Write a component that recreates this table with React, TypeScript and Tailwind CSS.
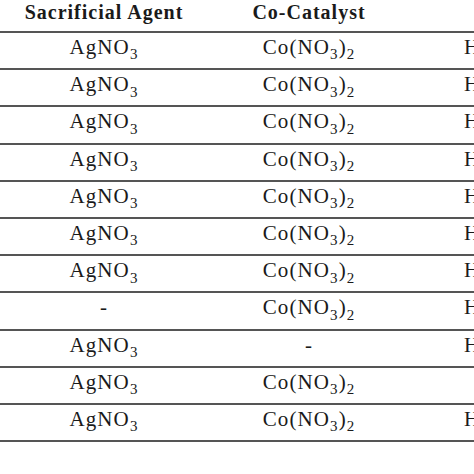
import React from "react";

const rows: [string, string, string][] = [
  ["ag", "co", "H"],
  ["ag", "co", "H"],
  ["ag", "co", "H"],
  ["ag", "co", "H"],
  ["ag", "co", "H"],
  ["ag", "co", "H"],
  ["ag", "co", "H"],
  ["-", "co", "H"],
  ["ag", "-", "H"],
  ["ag", "co", ""],
  ["ag", "co", "H"],
];

function Sub({ children }: { children: React.ReactNode }) {
  return (
    <sub className="text-[15px] relative bottom-[-0.36em] leading-none">
      {children}
    </sub>
  );
}

function Cell({ v }: { v: string }) {
  if (v === "ag")
    return (
      <span>
        AgNO<Sub>3</Sub>
      </span>
    );
  if (v === "co")
    return (
      <span>
        Co(NO<Sub>3</Sub>)<Sub>2</Sub>
      </span>
    );
  return <span>{v}</span>;
}

export default function App() {
  return (
    <div
      className="w-[474px] h-[474px] overflow-hidden bg-white text-[#1a1a1a]"
      style={{ fontFamily: '"Liberation Serif", "Times New Roman", serif' }}
    >
      <div className="w-[620px]">
        <div className="grid grid-cols-[208px_202px_210px] h-[33px] border-b-2 border-[#555] items-start pt-[1px] text-[20px] leading-[22px] font-bold tracking-[1px]">
          <div className="text-center">Sacrificial Agent</div>
          <div className="text-center">Co-Catalyst</div>
          <div></div>
        </div>
        {rows.map((r, i) => (
          <div
            key={i}
            className="grid grid-cols-[208px_202px_210px] h-[37.2px] border-b-2 border-[#555] items-start pt-[2px] text-[21px] leading-[24px] tracking-[1.1px]"
          >
            <div className="text-center">
              <Cell v={r[0]} />
            </div>
            <div className="text-center">
              <Cell v={r[1]} />
            </div>
            <div className="pl-[54px]">
              {r[2] ? (
                <span>
                  H<Sub>2</Sub>O
                </span>
              ) : null}
            </div>
          </div>
        ))}
      </div>
    </div>
  );
}
